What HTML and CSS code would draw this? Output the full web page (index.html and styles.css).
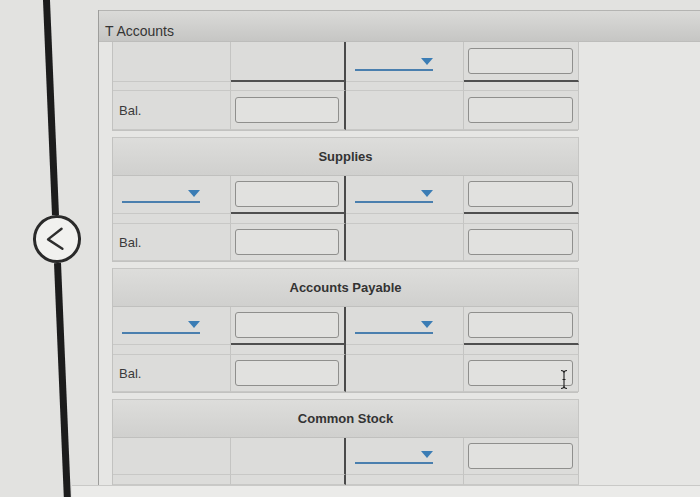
FILE: index.html
```html
<!DOCTYPE html>
<html lang="en">
<head>
<meta charset="utf-8">
<title>T Accounts</title>
<link rel="stylesheet" href="styles.css">
</head>
<body>
<div class="screen">
  <aside class="rail">
    <div class="bar bar-top"></div>
    <button class="back" type="button" aria-label="Back">
      <svg width="42" height="42" viewBox="0 0 42 42"><path d="M26 11 L12 21 L26 31" fill="none" stroke="#2e2e2e" stroke-width="2.4" stroke-linecap="round" stroke-linejoin="round"/></svg>
    </button>
    <div class="bar bar-bottom"></div>
  </aside>

  <main class="main">
    <section class="panel">
      <header class="panel-title">T Accounts</header>
      <div class="accounts">

        <div class="acct acct-first">
          <div class="c"></div>
          <div class="c c2 sum"></div>
          <div class="c"><div class="dd"><svg width="12" height="7" viewBox="0 0 12 7"><path d="M0 0H12L6 7Z" fill="#3b7db5"/></svg><span class="dd-line"></span></div></div>
          <div class="c c4 sum"><span class="inp"></span></div>

          <div class="c"></div><div class="c c2"></div><div class="c"></div><div class="c c4"></div>

          <div class="c bal">Bal.</div>
          <div class="c c2"><span class="inp"></span></div>
          <div class="c"></div>
          <div class="c c4"><span class="inp"></span></div>
        </div>

        <div class="acct">
          <div class="acct-head">Supplies</div>
          <div class="c"><div class="dd"><svg width="12" height="7" viewBox="0 0 12 7"><path d="M0 0H12L6 7Z" fill="#3b7db5"/></svg><span class="dd-line"></span></div></div>
          <div class="c c2 sum"><span class="inp"></span></div>
          <div class="c"><div class="dd"><svg width="12" height="7" viewBox="0 0 12 7"><path d="M0 0H12L6 7Z" fill="#3b7db5"/></svg><span class="dd-line"></span></div></div>
          <div class="c c4 sum"><span class="inp"></span></div>

          <div class="c"></div><div class="c c2"></div><div class="c"></div><div class="c c4"></div>

          <div class="c bal">Bal.</div>
          <div class="c c2"><span class="inp"></span></div>
          <div class="c"></div>
          <div class="c c4"><span class="inp"></span></div>
        </div>

        <div class="acct">
          <div class="acct-head">Accounts Payable</div>
          <div class="c"><div class="dd"><svg width="12" height="7" viewBox="0 0 12 7"><path d="M0 0H12L6 7Z" fill="#3b7db5"/></svg><span class="dd-line"></span></div></div>
          <div class="c c2 sum"><span class="inp"></span></div>
          <div class="c"><div class="dd"><svg width="12" height="7" viewBox="0 0 12 7"><path d="M0 0H12L6 7Z" fill="#3b7db5"/></svg><span class="dd-line"></span></div></div>
          <div class="c c4 sum"><span class="inp"></span></div>

          <div class="c"></div><div class="c c2"></div><div class="c"></div><div class="c c4"></div>

          <div class="c bal">Bal.</div>
          <div class="c c2"><span class="inp"></span></div>
          <div class="c"></div>
          <div class="c c4 has-cursor"><span class="inp"></span>
            <svg class="cursor" width="8" height="21" viewBox="0 0 8 21"><path d="M1 1.5 Q4 1.5 4 4 V17 Q4 19.5 1 19.5 M7 1.5 Q4 1.5 4 4 M4 17 Q4 19.5 7 19.5 M2.5 10.5 H5.5" fill="none" stroke="#1e1e1e" stroke-width="1.1"/></svg>
          </div>
        </div>

        <div class="acct acct-cut">
          <div class="acct-head">Common Stock</div>
          <div class="c"></div>
          <div class="c c2"></div>
          <div class="c"><div class="dd"><svg width="12" height="7" viewBox="0 0 12 7"><path d="M0 0H12L6 7Z" fill="#3b7db5"/></svg><span class="dd-line"></span></div></div>
          <div class="c c4"><span class="inp"></span></div>

          <div class="c"></div><div class="c c2"></div><div class="c"></div><div class="c c4"></div>
        </div>

      </div>
    </section>
    <div class="footer"></div>
  </main>
</div>
</body>
</html>
```

FILE: styles.css
```css
* { box-sizing: border-box; }

html, body {
  margin: 0;
  padding: 0;
  background: #e2e2e0;
}

body {
  width: 700px;
  height: 497px;
  overflow: hidden;
  font-family: "Liberation Sans", Arial, sans-serif;
  color: #333;
}

.screen {
  display: flex;
  height: 497px;
  overflow: hidden;
}

/* left rail with the back button */
.rail {
  flex: 0 0 98px;
  margin: -12px 0 -12px 0;
  padding-left: 33px;
  display: flex;
  flex-direction: column;
  align-items: flex-start;
  transform: rotate(-2.4deg);
  transform-origin: 57px 251px;
}

.bar {
  width: 7px;
  margin-left: 20px;
  background: #1c1c1c;
}

.bar-top { height: 227px; }
.bar-bottom { flex: 1; }

.back {
  width: 48px;
  height: 48px;
  flex: 0 0 48px;
  padding: 0;
  border: 3px solid #2a2a2a;
  border-radius: 50%;
  background: #f1f1ef;
  display: flex;
  align-items: center;
  justify-content: center;
}

.back svg { display: block; }

/* main area */
.main {
  flex: 1;
  display: flex;
  flex-direction: column;
  min-width: 0;
}

.panel {
  flex: 1;
  min-height: 0;
  overflow: hidden;
  margin-top: 10px;
  border-left: 1px solid #9d9d9b;
  background: #e6e6e4;
  display: flex;
  flex-direction: column;
}

.panel-title {
  flex: 0 0 32px;
  display: flex;
  align-items: flex-end;
  padding: 0 0 2px 6px;
  font-size: 14px;
  color: #353535;
  background: linear-gradient(#dadad8, #c6c6c4);
  border-top: 1px solid #b4b4b2;
  border-bottom: 1px solid #bdbdbb;
}

.accounts {
  display: flex;
  flex-direction: column;
  gap: 6px;
  padding-left: 13px;
}

.acct {
  width: 466px;
  display: grid;
  grid-template-columns: 118px 115px 118px 115px;
  grid-template-rows: 39px 38px 10px 37px;
  border-left: 1px solid #c2c2c0;
  border-bottom: 1px solid #c2c2c0;
  background: #dcdcda;
}

.acct-first {
  grid-template-rows: 40px 9px 39px;
}

.acct-cut {
  grid-template-rows: 39px 37px 10px;
}

.acct-head {
  grid-column: 1 / -1;
  display: flex;
  align-items: center;
  justify-content: center;
  font-size: 13px;
  font-weight: bold;
  color: #333;
  background: linear-gradient(#dddddb, #d0d0ce);
  border-top: 1px solid #c6c6c4;
  border-right: 1px solid #c6c6c4;
  border-bottom: 1px solid #c0c0be;
}

.c {
  display: flex;
  align-items: center;
  min-width: 0;
  border-right: 1px solid #c4c4c2;
  border-bottom: 1px solid #c8c8c6;
  background: #dcdcda;
}

.c2 { border-right: 2px solid #4a4a4a; }
.sum { border-bottom: 2px solid #4f4f4f; }

.bal {
  padding-left: 6px;
  font-size: 13px;
  color: #3a3a3a;
}

.inp {
  flex: 1;
  height: 26px;
  margin: 0 5px 0 4px;
  border: 1.5px solid #8f8f8d;
  border-radius: 3px;
  background: #e1e1df;
}

.dd {
  width: 78px;
  margin-left: 9px;
  align-self: flex-end;
  margin-bottom: 10px;
  display: flex;
  flex-direction: column;
  align-items: flex-end;
}

.dd svg {
  display: block;
  margin-bottom: 4px;
}

.dd-line {
  display: block;
  width: 100%;
  height: 2px;
  background: #4a7fae;
}

.has-cursor { position: relative; }

.cursor {
  position: absolute;
  right: 10px;
  top: 14px;
}

.footer {
  flex: 0 0 12px;
  margin-left: -26px;
  background: #ebebe9;
  border-top: 1px solid #c9c9c7;
}
```
